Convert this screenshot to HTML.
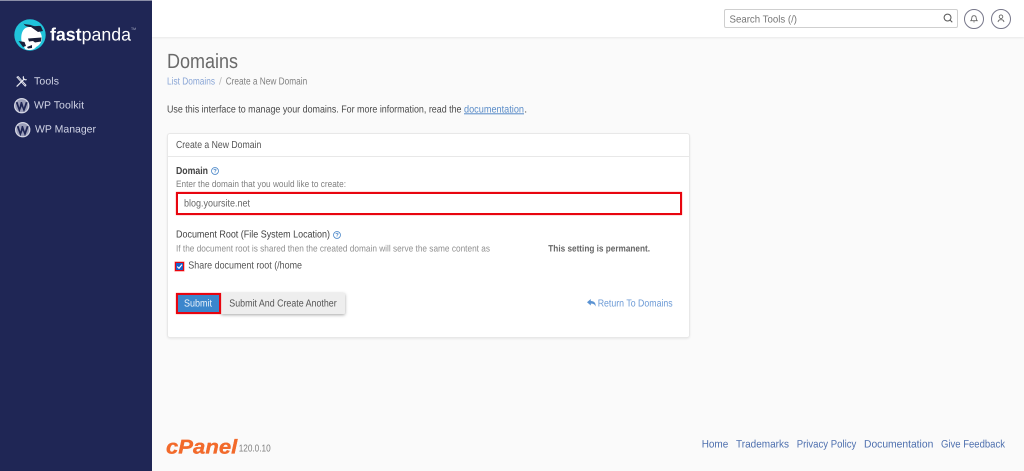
<!DOCTYPE html>
<html><head><meta charset="utf-8"><style>
html,body{margin:0;padding:0}
body{width:1024px;height:471px;overflow:hidden;background:#fafafa;position:relative;font-family:"Liberation Sans",sans-serif;text-rendering:geometricPrecision}
.b{position:absolute;box-sizing:border-box}
svg{position:absolute;overflow:visible}
text{white-space:pre;font-size:10.2px}
.soft{filter:blur(.25px)}
</style></head><body>
<div class="b" style="left:152px;top:0;width:872px;height:37px;background:#fff;box-shadow:0 1px 2px rgba(0,0,0,.07)"></div>
<div class="b" style="left:0;top:0;width:152px;height:471px;background:#1f2655"></div>
<div class="b" style="left:0;top:0;width:152px;height:1px;background:#8b8fa8"></div>

<svg style="left:14px;top:19px" width="32" height="32" viewBox="0 0 32 32">
<circle cx="16" cy="16" r="15.7" fill="#20c3da"/>
<path d="M7.5 22 C6.5 15 9 8 15 8 C22 7 28 12 28 20 C27 25 24 27 22 28 C21 31 14 32 11 30 Z" fill="#fff"/>
<path d="M9.5 4.5 C11 7 13 8 17 8 L24 13 L29 12 L27 7.5 C25 6 22 8 18 6.5 C15 5 12 6 9.5 4.5 Z" fill="#1a1f3a"/>
<path d="M14 19.5 L27.5 18.5 L27 22.5 L21 23.5 L19 22 L15 22.5 Z M4.5 22 L10.5 23 L12 27 L9 28 Z M13 28 L18 26 L18 29 L14 29.5 Z" fill="#1a1f3a"/>
</svg>

<svg style="left:16px;top:76px" width="11" height="11" viewBox="0 0 11 11" fill="none" stroke="#e9eaf2" stroke-width="1.2" stroke-linecap="round">
<path d="M1 10.2 L8 3.2"/><path d="M7.4 .8 a2.3 2.3 0 0 0 2.8 2.9"/><path d="M1 1.2 L2.2 .6 L10 9.2 L9.2 10.2 L1 1.2 Z" stroke-width=".9"/>
</svg>

<svg style="left:14px;top:98px" width="15.4" height="15.4" viewBox="0 0 16 16"><circle cx="8" cy="8" r="8" fill="#d5d7e4"/><circle cx="8" cy="8" r="6.7" fill="#9a9db8"/><path d="M1.8 4.6 L5.6 14.8 L8 8.6 L10.4 14.8 L14.2 4.6 L12.2 4.2 L10.2 10 L8.4 4.2 L7 4.2 L5.6 10 L3.8 4.2 Z" fill="#1f2655"/></svg>
<svg style="left:15px;top:122px" width="15.4" height="15.4" viewBox="0 0 16 16"><circle cx="8" cy="8" r="8" fill="#d5d7e4"/><circle cx="8" cy="8" r="6.7" fill="#9a9db8"/><path d="M1.8 4.6 L5.6 14.8 L8 8.6 L10.4 14.8 L14.2 4.6 L12.2 4.2 L10.2 10 L8.4 4.2 L7 4.2 L5.6 10 L3.8 4.2 Z" fill="#1f2655"/></svg>

<div class="b" style="left:724px;top:9px;width:234px;height:19px;background:#fff;border:1px solid #cfcfcf;border-radius:2px"></div>
<svg style="left:943px;top:13px" width="10" height="10" viewBox="0 0 11 11" fill="none" stroke="#555" stroke-width="1.1"><circle cx="5" cy="5" r="3.8"/><path d="M8 8 L10.2 10.2"/></svg>
<div class="b" style="left:964px;top:9px;width:20px;height:20px;border:1px solid #77778a;border-radius:50%"></div>
<svg style="left:970px;top:14px" width="8" height="9" viewBox="0 0 9 9" fill="none" stroke="#666" stroke-width="1"><path d="M1 7 C2 6 2 4 2.2 3 C2.5 .8 6.5 .8 6.8 3 C7 4 7 6 8 7 Z"/><path d="M3.8 8.3 h1.4"/></svg>
<div class="b" style="left:991px;top:9px;width:20px;height:20px;border:1px solid #77778a;border-radius:50%"></div>
<svg style="left:997px;top:14px" width="8" height="9" viewBox="0 0 9 9" fill="none" stroke="#666" stroke-width="1"><circle cx="4.5" cy="2.5" r="2"/><path d="M1.2 8.5 C1.5 5 7.5 5 7.8 8.5"/></svg>

<div class="b" style="left:166.5px;top:133px;width:523px;height:205px;background:#fff;border:1px solid #e8e8e8;border-radius:3px;box-shadow:0 1px 2px rgba(0,0,0,.07)"></div>
<div class="b" style="left:167px;top:156px;width:522px;height:1px;background:#e8e8e8"></div>
<svg style="left:211px;top:167px" width="8" height="8" viewBox="0 0 9 9" fill="none" stroke="#4a86c8" stroke-width=".9"><circle cx="4.5" cy="4.5" r="3.9"/><path d="M3.3 3.5 C3.4 2 5.7 2 5.7 3.4 C5.7 4.4 4.5 4.3 4.5 5.4 M4.5 6.2 v.7"/></svg>
<div class="b" style="left:176px;top:192px;width:506px;height:23px;background:#fff;border:2px solid #e8050f;box-shadow:0 0 1px #f55"></div>
<svg style="left:333px;top:231px" width="8" height="8" viewBox="0 0 9 9" fill="none" stroke="#4a86c8" stroke-width=".9"><circle cx="4.5" cy="4.5" r="3.9"/><path d="M3.3 3.5 C3.4 2 5.7 2 5.7 3.4 C5.7 4.4 4.5 4.3 4.5 5.4 M4.5 6.2 v.7"/></svg>
<div class="b" style="left:175px;top:262px;width:9px;height:9px;background:#1a5fc8;border:1.5px solid #e8050f;box-shadow:0 0 0 .5px #f77"></div>
<svg style="left:176px;top:263px" width="7" height="7" viewBox="0 0 7 7" fill="none" stroke="#fff" stroke-width="1.2"><path d="M1.2 3.6 L3 5.3 L6 1.6"/></svg>
<div class="b" style="left:221px;top:293px;width:124px;height:21px;background:#eee;border-radius:1px;box-shadow:0 1px 3px rgba(0,0,0,.35)"></div>
<div class="b" style="left:176px;top:293px;width:45px;height:21px;background:#3b86cc;border:2px solid #e8050f;box-shadow:0 0 1px #f55"></div>
<svg style="left:587px;top:299px" width="9" height="8" viewBox="0 0 9 8"><path d="M0 3.2 L3.8 0 V2 C7 2 9 3.8 8.6 7.5 C7.8 5.4 6.5 4.6 3.8 4.6 V6.5 Z" fill="#5b93d3"/></svg>

<svg class="soft" style="left:0;top:0" width="1024" height="471" viewBox="0 0 1024 471">
<text x="50" y="40.5" style="font-size:18px" fill="#fff" textLength="81" lengthAdjust="spacingAndGlyphs"><tspan font-weight="700">fast</tspan><tspan>panda</tspan></text>
<text x="131" y="30" style="font-size:3.5px" fill="#aeb2c6">TM</text>
<text x="34" y="84.5" style="font-size:10.5px" fill="#cfd2e4" textLength="25">Tools</text>
<text x="34" y="108.5" style="font-size:10.5px" fill="#cfd2e4" textLength="50">WP Toolkit</text>
<text x="35" y="132.5" style="font-size:10.5px" fill="#cfd2e4" textLength="61">WP Manager</text>
<text x="729.5" y="22.5" style="font-size:10.2px" fill="#777" textLength="67.5" lengthAdjust="spacingAndGlyphs">Search Tools (/)</text>

<text x="167" y="68" style="font-size:20.5px" fill="#6a6a6a" textLength="71" lengthAdjust="spacingAndGlyphs">Domains</text>
<text x="167" y="84.5" fill="#8aa6d6" textLength="48" lengthAdjust="spacingAndGlyphs">List Domains</text>
<text x="219" y="84.5" fill="#bbb">/</text>
<text x="225.7" y="84.5" fill="#808080" textLength="81.5" lengthAdjust="spacingAndGlyphs">Create a New Domain</text>
<text x="167" y="112.3" fill="#4a4a4a" textLength="294.5" lengthAdjust="spacingAndGlyphs">Use this interface to manage your domains. For more information, read the</text>
<text x="464" y="112.3" fill="#5a8cc8" textLength="60" lengthAdjust="spacingAndGlyphs" text-decoration="underline">documentation</text>
<text x="524.3" y="112.3" fill="#4a4a4a">.</text>

<text x="176" y="148" fill="#555" textLength="85.3" lengthAdjust="spacingAndGlyphs">Create a New Domain</text>
<text x="176" y="174" fill="#444" font-weight="700" textLength="32" lengthAdjust="spacingAndGlyphs">Domain</text>
<text x="176" y="187" style="font-size:9.2px" fill="#808080" textLength="170" lengthAdjust="spacingAndGlyphs">Enter the domain that you would like to create:</text>
<text x="184" y="206.7" fill="#666" textLength="66" lengthAdjust="spacingAndGlyphs">blog.yoursite.net</text>
<text x="176" y="237.7" fill="#444" textLength="154" lengthAdjust="spacingAndGlyphs">Document Root (File System Location)</text>
<text x="176" y="251.7" style="font-size:9.2px" fill="#909090" textLength="314" lengthAdjust="spacingAndGlyphs">If the document root is shared then the created domain will serve the same content as</text>
<text x="548.3" y="251.7" style="font-size:9.2px" fill="#666" font-weight="700" textLength="101.7" lengthAdjust="spacingAndGlyphs">This setting is permanent.</text>
<text x="188.3" y="268.7" fill="#555" textLength="113.7" lengthAdjust="spacingAndGlyphs">Share document root (/home</text>
<text x="184" y="306.7" fill="#e8f1fa" textLength="28" lengthAdjust="spacingAndGlyphs">Submit</text>
<text x="229.3" y="306.7" fill="#555" textLength="107.4" lengthAdjust="spacingAndGlyphs">Submit And Create Another</text>
<text x="597.7" y="306.7" fill="#6d9bd6" textLength="75" lengthAdjust="spacingAndGlyphs">Return To Domains</text>

<text x="166" y="453.3" style="font-size:20px" font-weight="700" font-style="italic" fill="#f26a2b" stroke="#f26a2b" stroke-width=".35" textLength="71.3" lengthAdjust="spacingAndGlyphs">cPanel</text>
<text x="238.7" y="451.7" style="font-size:10px" fill="#808080" textLength="32" lengthAdjust="spacingAndGlyphs">120.0.10</text>
<text x="701.7" y="447.7" style="font-size:10.8px" fill="#4d6fae" textLength="26.6" lengthAdjust="spacingAndGlyphs">Home</text>
<text x="736" y="447.7" style="font-size:10.8px" fill="#4d6fae" textLength="53" lengthAdjust="spacingAndGlyphs">Trademarks</text>
<text x="796.7" y="447.7" style="font-size:10.8px" fill="#4d6fae" textLength="59.6" lengthAdjust="spacingAndGlyphs">Privacy Policy</text>
<text x="864" y="447.7" style="font-size:10.8px" fill="#4d6fae" textLength="69.3" lengthAdjust="spacingAndGlyphs">Documentation</text>
<text x="941" y="447.7" style="font-size:10.8px" fill="#4d6fae" textLength="64" lengthAdjust="spacingAndGlyphs">Give Feedback</text>
</svg>
</body></html>
